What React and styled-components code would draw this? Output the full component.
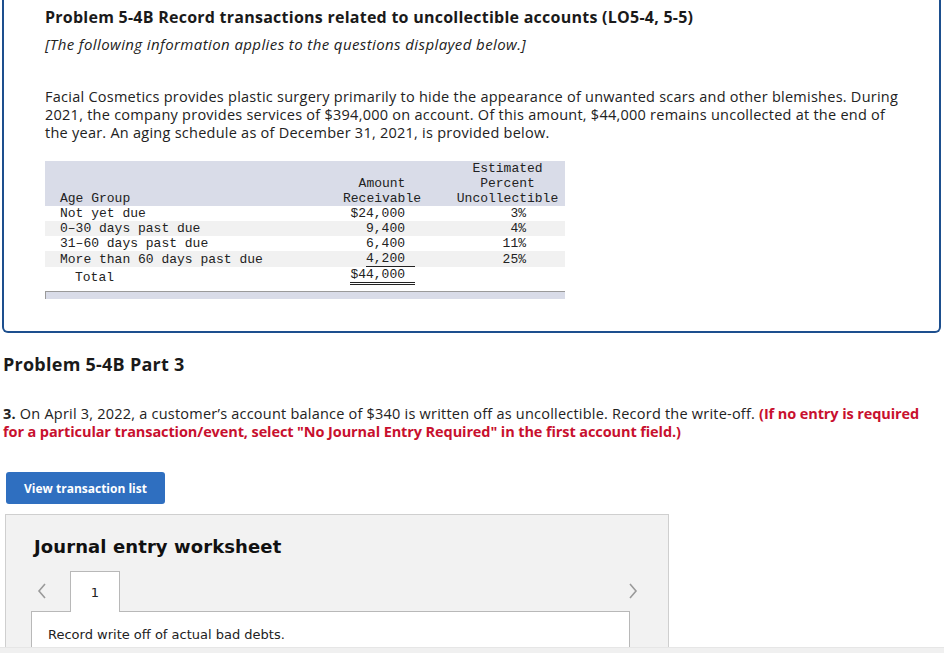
import React from 'react';
import styled, { createGlobalStyle } from 'styled-components';

const GlobalStyle = createGlobalStyle`
  html, body {
    margin: 0;
    padding: 0;
    background: #ffffff;
  }
  body {
    font-family: 'Open Sans', 'Liberation Sans', Arial, sans-serif;
    color: #222;
  }
`;

const Page = styled.div`
  height: 653px;
  display: flex;
  flex-direction: column;
  overflow: hidden;
`;

const Scroller = styled.div`
  flex: 1;
  overflow: hidden;
  padding: 0 3px 0 2px;
`;

const BottomStrip = styled.div`
  height: 5px;
  background: #f0f0f0;
  border-top: 1px solid #e6e6e6;
`;

const InfoCard = styled.section`
  border: 2px solid #1d4f8e;
  border-top: none;
  border-radius: 0 0 6px 6px;
  padding: 6px 39px 32px 41px;
`;

const ProblemTitle = styled.h1`
  margin: 0;
  font-size: 16px;
  font-weight: 700;
  letter-spacing: 0.25px;
  line-height: 22px;
  color: #1a1a1a;
`;

const Note = styled.p`
  margin: 5px 0 0;
  font-size: 15px;
  font-style: italic;
  letter-spacing: 0.4px;
  line-height: 22px;
  color: #222;
`;

const Body = styled.p`
  margin: 33px 0 0;
  font-size: 14.5px;
  letter-spacing: 0.25px;
  line-height: 18px;
  color: #222;
`;

const AgingTable = styled.table`
  margin-top: 19px;
  width: 520px;
  table-layout: fixed;
  border-collapse: collapse;
  font-family: 'Liberation Mono', 'Courier New', monospace;
  font-size: 13px;
  line-height: 15px;
  color: #222;

  td, th {
    padding: 0;
    font-weight: 400;
    vertical-align: bottom;
    box-sizing: border-box;
    white-space: nowrap;
  }
`;

const HeadRow = styled.tr`
  background: #d9dce8;
`;

const Row = styled.tr`
  background: ${(p) => (p.$shade ? '#f1f1f1' : '#ffffff')};
`;

const LabelCell = styled.td`
  padding-left: ${(p) => (p.$indent ? 30 : 15)}px !important;
  text-align: left;
`;

const AmountCell = styled.td`
  text-align: ${(p) => (p.$head ? 'center' : 'right')};
  padding-right: ${(p) => (p.$head ? 0 : 15)}px !important;
`;

const PercentCell = styled.td`
  text-align: ${(p) => (p.$head ? 'center' : 'right')};
  padding-left: ${(p) => (p.$head ? 20 : 0)}px !important;
  padding-right: ${(p) => (p.$head ? 0 : 39)}px !important;
`;

const Figure = styled.span`
  display: inline-block;
  padding-right: 10px;
  border-bottom: ${(p) =>
    p.$rule === 'double' ? '3px double #222' : p.$rule === 'single' ? '1px solid #222' : 'none'};
  line-height: 15px;
`;

const TableFoot = styled.div`
  margin-top: 6px;
  width: 519px;
  height: 7px;
  background: #d9dce8;
  border-top: 1px solid #9a9a9a;
  border-left: 1px solid #9a9a9a;
`;

const PartTitle = styled.h2`
  margin: 20px 0 0 1px;
  font-size: 18px;
  font-weight: 700;
  letter-spacing: 0.25px;
  line-height: 22px;
  color: #1a1a1a;
`;

const Question = styled.p`
  margin: 30px 0 0 1px;
  font-size: 14.5px;
  letter-spacing: 0.22px;
  line-height: 18px;
  color: #222;
`;

const QuestionNumber = styled.strong`
  font-weight: 700;
`;

const Instruction = styled.strong`
  color: #c8102e;
  font-weight: 700;
  letter-spacing: -0.1px;
`;

const ViewButton = styled.button`
  margin: 31px 0 0 4px;
  width: 159px;
  height: 32px;
  border: none;
  border-radius: 3px;
  background: #2f6fc0;
  color: #fff;
  font-family: 'Open Sans', 'Liberation Sans', Arial, sans-serif;
  font-size: 12px;
  font-weight: 700;
  cursor: pointer;
`;

const Worksheet = styled.div`
  margin: 10px 0 0 3px;
  width: 664px;
  height: 160px;
  background: #f2f2f2;
  border: 1px solid #cfcfcf;
  padding: 20px 0 0 25px;
  box-sizing: border-box;
`;

const WorksheetTitle = styled.h3`
  margin: 0 0 0 3px;
  font-family: 'DejaVu Sans', Verdana, sans-serif;
  font-size: 18px;
  font-weight: 700;
  letter-spacing: 0.1px;
  line-height: 24px;
  color: #111;
`;

const TabBar = styled.div`
  margin-top: 12px;
  width: 612px;
  display: flex;
  align-items: flex-end;
`;

const Chevron = styled.span`
  width: ${(p) => (p.$right ? 20 : 39)}px;
  height: 40px;
  display: flex;
  align-items: center;
  justify-content: ${(p) => (p.$right ? 'center' : 'flex-start')};
  padding-left: ${(p) => (p.$right ? 0 : 6)}px;
  box-sizing: border-box;
  color: #9a9a9a;
  margin-left: ${(p) => (p.$right ? 'auto' : '0')};
`;

const Tab = styled.div`
  width: 50px;
  height: 41px;
  box-sizing: border-box;
  background: #fff;
  border: 1px solid #b8b8b8;
  border-bottom: none;
  margin-bottom: -1px;
  position: relative;
  z-index: 1;
  display: flex;
  align-items: center;
  justify-content: center;
  font-family: 'DejaVu Sans', Verdana, sans-serif;
  font-size: 13px;
  color: #222;
`;

const EntryBox = styled.div`
  width: 599px;
  height: 60px;
  box-sizing: border-box;
  background: #fff;
  border: 1px solid #b8b8b8;
  border-bottom: none;
  padding: 15px 0 0 16px;
  font-family: 'DejaVu Sans', Verdana, sans-serif;
  font-size: 13px;
  color: #222;
`;

const ChevronIcon = ({ dir }) => (
  <svg width="10" height="16" viewBox="0 0 10 16" fill="none">
    <path
      d={dir === 'left' ? 'M8 1 L2 8 L8 15' : 'M2 1 L8 8 L2 15'}
      stroke="currentColor"
      strokeWidth="1.6"
    />
  </svg>
);

const rows = [
  { group: 'Not yet due', amount: '$24,000', pct: '3%' },
  { group: '0–30 days past due', amount: '9,400', pct: '4%', shade: true },
  { group: '31–60 days past due', amount: '6,400', pct: '11%' },
  { group: 'More than 60 days past due', amount: '4,200', pct: '25%', shade: true, rule: 'single' },
];

export default function App() {
  return (
    <Page>
      <GlobalStyle />
      <Scroller>
        <InfoCard>
          <ProblemTitle>
            Problem 5-4B Record transactions related to uncollectible accounts (LO5-4, 5-5)
          </ProblemTitle>
          <Note>[The following information applies to the questions displayed below.]</Note>
          <Body>
            Facial Cosmetics provides plastic surgery primarily to hide the appearance of unwanted
            scars and other blemishes. During 2021, the company provides services of $394,000 on
            account. Of this amount, $44,000 remains uncollected at the end of the year. An aging
            schedule as of December 31, 2021, is provided below.
          </Body>

          <AgingTable>
            <colgroup>
              <col style={{ width: 289 }} />
              <col style={{ width: 96 }} />
              <col style={{ width: 135 }} />
            </colgroup>
            <tbody>
              <HeadRow>
                <LabelCell as="th">Age Group</LabelCell>
                <AmountCell as="th" $head>
                  Amount
                  <br />
                  Receivable
                </AmountCell>
                <PercentCell as="th" $head>
                  Estimated
                  <br />
                  Percent
                  <br />
                  Uncollectible
                </PercentCell>
              </HeadRow>
              {rows.map((r) => (
                <Row key={r.group} $shade={r.shade}>
                  <LabelCell>{r.group}</LabelCell>
                  <AmountCell>
                    <Figure $rule={r.rule}>{r.amount}</Figure>
                  </AmountCell>
                  <PercentCell>{r.pct}</PercentCell>
                </Row>
              ))}
              <Row>
                <LabelCell $indent>Total</LabelCell>
                <AmountCell>
                  <Figure $rule="double">$44,000</Figure>
                </AmountCell>
                <PercentCell />
              </Row>
            </tbody>
          </AgingTable>
          <TableFoot />
        </InfoCard>

        <PartTitle>Problem 5-4B Part 3</PartTitle>
        <Question>
          <QuestionNumber>3.</QuestionNumber> On April 3, 2022, a customer’s account balance of
          $340 is written off as uncollectible. Record the write-off.{' '}
          <Instruction>
            (If no entry is required for a particular transaction/event, select "No Journal Entry
            Required" in the first account field.)
          </Instruction>
        </Question>

        <ViewButton>View transaction list</ViewButton>

        <Worksheet>
          <WorksheetTitle>Journal entry worksheet</WorksheetTitle>
          <TabBar>
            <Chevron>
              <ChevronIcon dir="left" />
            </Chevron>
            <Tab>1</Tab>
            <Chevron $right>
              <ChevronIcon dir="right" />
            </Chevron>
          </TabBar>
          <EntryBox>Record write off of actual bad debts.</EntryBox>
        </Worksheet>
      </Scroller>
      <BottomStrip />
    </Page>
  );
}
